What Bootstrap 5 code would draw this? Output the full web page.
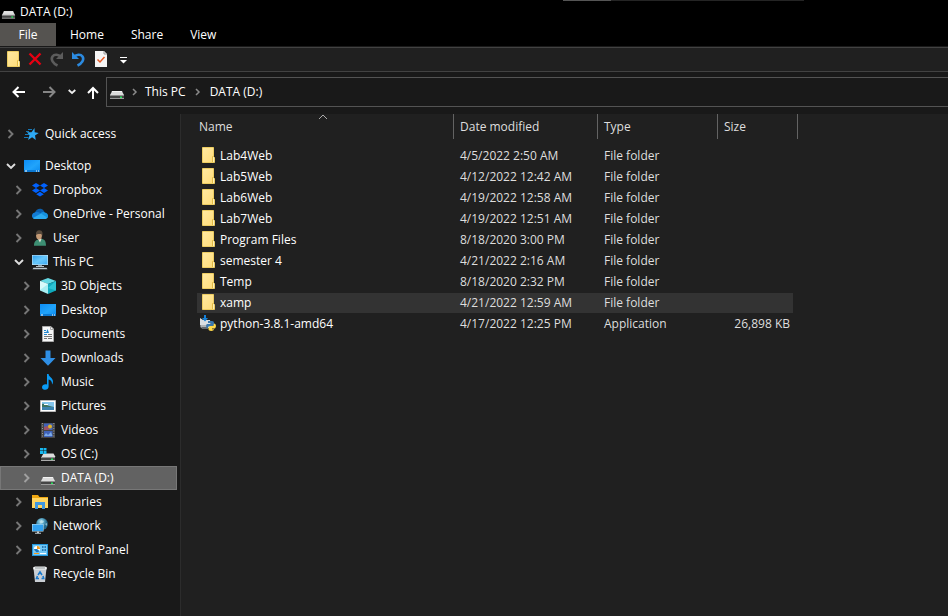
<!DOCTYPE html>
<html lang="en" data-bs-theme="dark">
<head>
<meta charset="utf-8">
<meta name="viewport" content="width=device-width, initial-scale=1">
<title>DATA (D:)</title>
<link href="https://cdn.jsdelivr.net/npm/bootstrap@5.3.0/dist/css/bootstrap.min.css" rel="stylesheet">
<style>
  body { background: #191919; color: #fff; font: 12px/24px "Open Sans", "Noto Sans", sans-serif; }
  button { font: inherit; color: inherit; background: none; border: 0; padding: 0; }
  svg { display: block; flex: none; }
  a { color: inherit; text-decoration: none; }
  .titlebar { background: #000; height: 23px; padding-left: 1px; }
  .behind { position: absolute; top: 0; left: 563px; width: 241px; height: 1px; background: linear-gradient(90deg, #555 20%, #242424 20%); }
  .ribbon { background: #000; height: 24px; border-bottom: 1px solid #191919; }
  .ribbon button { height: 23px; padding: 0 13px 0 14px; }
  .ribbon button.active { background: #555350; width: 56px; padding: 0; }
  .quickbar { background: #202020; border-top: 1px solid #424242; border-bottom: 1px solid #424242; height: 25px; padding: 0 0 2px 5px; gap: 6px; }
  .addressrow { padding: 5px 0 7px 11px; }
  .history { width: 95px; gap: 10px; }
  .history .forward { margin-left: 5px; }
  .crumbs { border: 1px solid #535353; border-right: 0; height: 30px; padding-left: 2px; }
  .crumbs svg + svg { margin: 0 3px 0 1px; }
  .tree { width: 180px; padding: 8px 0; }
  .tree li { height: 24px; display: flex; align-items: center; padding-left: 2px; border: 1px solid transparent; margin-right: 3px; }
  .tree li a { display: flex; align-items: center; gap: 5px; }
  .tree li button { width: 16px; height: 22px; margin-right: 5px; color: #767676; }
  .tree li button.open { color: #dedede; }
  .tree .lv1 { padding-left: 10px; }
  .tree .lv2 { padding-left: 18px; }
  .tree .leaf { padding-left: 31px; }
  .tree .picked { background: #626262; border-color: #777; }
  .tree .picked button { color: #a0a0a0; }
  .pane { background: #202020; border-left: 1px solid #2c2c2c; padding-left: 12px; }
  .files { border-collapse: separate; border-spacing: 0; color: #dedede; table-layout: fixed; width: 605px; }
  .files th { font-weight: 400; height: 25px; line-height: 25px; padding: 0 6px; border-right: 1px solid #636363; }
  .files th:first-child { width: 261px; position: relative; }
  .files th svg { position: absolute; top: 0; left: 50%; transform: translateX(-50%); }
  .files td { height: 21px; line-height: 21px; padding: 0 6px; background-clip: padding-box; white-space: nowrap; }
  .files td:first-child { border-left: 4px solid transparent; padding-left: 3px; color: #fff; }
  .files td:last-child { border-right: 5px solid transparent; padding-right: 3px; text-align: right; }
  .files tr.hovered td { background-color: #333; box-shadow: inset 0 1px #202020; }
  .w-date { width: 144px; } .w-type { width: 120px; } .w-size { width: 80px; }
  .files .gap-row td { height: 6px; line-height: 6px; }
  .filename { gap: 4px; }
  .filename svg { margin-bottom: 1px; }
</style>
<script src="https://cdn.jsdelivr.net/npm/bootstrap@5.3.0/dist/js/bootstrap.bundle.min.js"></script>
</head>
<body class="min-vh-100 d-flex flex-column">

<svg width="0" height="0" class="position-absolute" aria-hidden="true">
  <defs>
    <linearGradient id="gFold" x2="1" y2="1"><stop stop-color="#ffe9a2"/><stop offset="1" stop-color="#ffdc78"/></linearGradient>
    <linearGradient id="gScreen" x2="1" y2="1"><stop stop-color="#0c8cf5"/><stop offset=".55" stop-color="#21a4fb"/><stop offset="1" stop-color="#0a8af0"/></linearGradient>
    <linearGradient id="gPc" x2="1" y2="1"><stop stop-color="#2d9fee"/><stop offset=".5" stop-color="#68c8fb"/><stop offset="1" stop-color="#3eaaf2"/></linearGradient>
    <radialGradient id="gGlobe" cx=".4" cy=".3"><stop stop-color="#b8e0ec"/><stop offset=".5" stop-color="#5da8c6"/><stop offset="1" stop-color="#23698d"/></radialGradient>
    <symbol id="drive" viewBox="0 0 16 16"><path d="M3.200 5h9.600L15 9H1z" fill="#dcdcdc"/><path d="M3.200 5h9.600l.6 1H2.600z" fill="#f3f3f3"/><path d="M1 9h14v3.600H1z" fill="#454545"/><path d="M1 9h14v1H1z" fill="#8d8d8d"/><path d="M1 12h14v1H1z" fill="#9a9a9a"/><path d="M11 10.500h2V12h-2z" fill="#28e05b"/></symbol>
    <symbol id="osdrive" viewBox="0 0 16 16"><path d="M3.500 7.500h10L15.500 11h-14z" fill="#dcdcdc"/><path d="M1 11h14v3.600H1z" fill="#454545"/><path d="M1 11h14v1H1z" fill="#8d8d8d"/><path d="M1 14h14v1H1z" fill="#aaa"/><path d="M11 12.400h2V14h-2z" fill="#28e05b"/><path d="M0 2h3v2.500H0zM3.500 2h3v2.500h-3zM0 5h3v3H0zM3.500 5h3v3h-3z" fill="#18b8f0"/></symbol>
    <symbol id="folder" viewBox="0 0 16 16"><path d="M2.500.5h11v10h1v5h-12z" fill="url(#gFold)" stroke="#edcd62"/><path d="M12.500 15V9.500h1" fill="none" stroke="#e2bb44"/><path d="M13 10h1v5h-1z" fill="#fff0b8"/></symbol>
    <symbol id="chev" viewBox="0 0 16 16"><path d="M5.500 4l4 4-4 4" fill="none" stroke="currentColor" stroke-width="1.900"/></symbol>
    <symbol id="chevd" viewBox="0 0 16 16"><path d="M4 6l4 4 4-4" fill="none" stroke="currentColor" stroke-width="1.900"/></symbol>
    <symbol id="star" viewBox="0 0 16 16"><path d="M10.500 2l.2 4.300 4 .7-3.700 2.500.8 4.500-3.700-2.700-4.100 2.700 1.500-4.700L3 6.300l4.500-.1z" fill="#2eaaf5"/><path d="M4 3.500h4M2 5.500h3M1 8.500h4M0 11.500h4.500" stroke="#1679b8"/></symbol>
    <symbol id="desk" viewBox="0 0 16 16"><path d="M0 2h16v12H0z" fill="url(#gScreen)"/><path d="M0 12h16v2H0z" fill="#0b79d2"/><path d="M1 12.500h2v1H1zM12 12.500h1v1h-1zM14 12.500h1v1h-1z" fill="#fff"/></symbol>
    <symbol id="dropbox" viewBox="0 0 16 16"><path d="M4 1l4 2.500L4 6 0 3.500zM12 1l4 2.500L12 6 8 3.500zM4 6l4 2.500L4 11 0 8.500zM12 6l4 2.500-4 2.500-4-2.500zM8 9.800l3.800 2.400L8 14.600l-3.800-2.400z" fill="#0061fe"/></symbol>
    <symbol id="cloud" viewBox="0 0 16 16"><path d="M3 6.500C4 3.500 7 2 9.500 3c1.700.6 2.600 2 3 3.300L8 11 2 10z" fill="#0a5fae"/><path d="M3.500 6.200C6 5.500 7.500 6.400 9 7.500L3.500 13C-1 13-1.500 7 3.500 6.200z" fill="#127bd3"/><path d="M8.500 7.200c1.700-1.500 4-1.400 5-.4 2.500.6 3.300 3.300 1.900 5.100L10 11z" fill="#1490df"/><path d="M1 12l8-4.500 6.500 4.200c-.6.900-1.500 1.300-2.500 1.300H3.500c-1.200 0-2-.4-2.500-1z" fill="#2baaf0"/></symbol>
    <symbol id="user" viewBox="0 0 16 16"><path d="M2 15.700c0-4 2-6 4.500-6.200L10 9c3 .4 4 3 4 6.700z" fill="#3d8f73"/><path d="M6 9l2 3.500L9.700 8.500z" fill="#e8e4dc"/><ellipse cx="7" cy="5.500" rx="2.900" ry="4" fill="#c49a75"/><path d="M4 5C3.500 1.500 5.500 0 7.500.3 10.500.5 11 3 10.400 6l-1-2C7.500 4 5.500 3.500 4 5z" fill="#55483b"/></symbol>
    <symbol id="pc" viewBox="0 0 16 16"><path d="M0 1h16v10H0z" fill="#d1e5ef"/><path d="M.5 1.500h15v9H.5z" fill="url(#gPc)"/><path d="M6 11h4v2H6z" fill="#83939d"/><path d="M4 12h8v1H4z" fill="#b9c4ca"/><path d="M1.500 13.700h13l1 1.500H.5z" fill="#b9c8d0"/></symbol>
    <symbol id="cube" viewBox="0 0 16 16"><path d="M8 0l8 3-8 3-8-3z" fill="#65d9e4"/><path d="M0 3l8 3v10l-8-3.500z" fill="#a8eef2"/><path d="M8 6l8-3v9.500L8 16z" fill="#0faabd"/><path d="M0 3l8 3-8 6z" fill="#d7fafa"/><path d="M16 3v9.500L8 10z" fill="#2dc1d2"/></symbol>
    <symbol id="doc" viewBox="0 0 16 16"><path d="M2.500.5h8.500l2.500 2.500v12.500h-11z" fill="#f7f7f7" stroke="#aaa"/><path d="M10.500.5v3h3" fill="none" stroke="#aaa"/><path d="M4 4.500h2M4 6.500h4M4 8.500h3" stroke="#2387cf"/><path d="M6 7l1.500-4L9 7z" fill="#2387cf"/><path d="M8 8.500h4M4 10.500h8M4 12.500h3M8 12.500h4" stroke="#777"/></symbol>
    <symbol id="down" viewBox="0 0 16 16"><path d="M5.500.5h5V8h5L8 15.700.5 8h5z" fill="#2f8fe5"/></symbol>
    <symbol id="music" viewBox="0 0 16 16"><path d="M7 0h1.600c.3 3.500 4.400 3.500 4.400 7.500 0 1.200-.4 2.300-1 3 .2-3-1-4.500-3.400-5v7.300C8.600 17 2 16.600 2 13.200 2 10.600 5 9.800 7 10.500z" fill="#0a9bf5"/></symbol>
    <symbol id="pic" viewBox="0 0 16 16"><path d="M.5 2.500h15v11H.5z" fill="#fff" stroke="#b9b9b9"/><path d="M2 4h12v8H2z" fill="#84c6ed"/><path d="M2 6c3-1 4 1.500 12 3v1H2z" fill="#3d7564"/><path d="M2 9h12v3H2z" fill="#3b82af"/><path d="M4 6h4v1H4z" fill="#fff"/></symbol>
    <symbol id="video" viewBox="0 0 16 16"><path d="M1 1h14v15H1z" fill="#454545"/><path d="M4 1.500h8.500V8H4zM4 9h8.500v6H4z" fill="#3f62b9"/><path d="M2.500 1v15M13.800 1v15" stroke="#999" stroke-dasharray="1 1.500"/><path d="M4 7V5l3-1 3 1-1 3H4z" fill="#9a5268"/><circle cx="10" cy="4.500" r="2" fill="#dfb126"/><path d="M4 14l2-3 2 2 3-3 1.500 4z" fill="#7caae8"/></symbol>
    <symbol id="lib" viewBox="0 0 16 16"><path d="M0 1h6l1.500 2H16v11H0z" fill="#eea711"/><path d="M0 4h16v10H0z" fill="#ffd561"/><path d="M3 15V8h10v7h-3v-4H6v4z" fill="#3f97e0"/></symbol>
    <symbol id="net" viewBox="0 0 16 16"><circle cx="10" cy="6" r="5.900" fill="url(#gGlobe)"/><path d="M9 2l3 1-1 2-3 .5zM13 6l2-1v3z" fill="#d1edf2" opacity=".6"/><path d="M0 6h11.500v7.500H0z" fill="#c4e7f6"/><path d="M.5 6.500h10.500V13H.5z" fill="#31a1ef"/><path d="M5 13.500h2v1.200H5zM3 14.700h6v1H3z" fill="#c2ced5"/></symbol>
    <symbol id="cp" viewBox="0 0 16 16"><path d="M0 2h16v12H0z" fill="#2397dd"/><path d="M1 3h14v10H1z" fill="#73c8f5"/><circle cx="5" cy="7" r="3.100" fill="#fff"/><path d="M5 7V4a3 3 0 0 1 3 3z" fill="#f39b1e"/><path d="M5 7l2.500 2A3.100 3.100 0 0 1 2 7z" fill="#1678c0"/><path d="M10 5h1.500M12.500 5H14M10 8h1.500M12.500 8H14" stroke="#125c9c" stroke-width="1.500"/><path d="M2 11.500h5" stroke="#f39b1e"/><path d="M8 11.500h6" stroke="#fff"/></symbol>
    <symbol id="bin" viewBox="0 0 16 16"><path d="M1.500 2h13L13 16H3z" fill="#c9ced3"/><path d="M1 1.500L3 .5h10l2 1-.5 2h-13z" fill="#f2f3f4"/><path d="M3 1.500h10v1H3z" fill="#8f969b"/><path d="M6 9l2-3 2 3M11 10l.7 2.500H9.500M7 12.500H4.500l.9-2.500" fill="none" stroke="#1879cd" stroke-width="1.600"/></symbol>
    <symbol id="py" viewBox="0 0 16 16"><path d="M0 3l3 2h7l1 6-1 2H1l-1-3z" fill="#d9dfe3"/><path d="M0 10h8v4H2z" fill="#62696e"/><path d="M1 11h6" stroke="#fff"/><path d="M4 0h2v3h2L5 6.500 2 3h2z" fill="#1681d8"/><path d="M8 6h4c1.500 0 2 .8 2 2v2l-2 1.500H8.500L7.500 13C5.500 13 6 9 7 9h4V8H8z" fill="#3a78ad"/><path d="M14 8.500c2.500 0 2.500 4.500.5 5H12v.8h2c0 2-5.500 2.200-5.500 0v-2l1.500-1.200h3.300z" fill="#ffd94a"/></symbol>
  </defs>
</svg>

<header>
  <div class="titlebar d-flex align-items-center">
    <svg width="15" height="16" class="mt-1"><use href="#drive"/></svg>
    <span class="ms-1">DATA (D:)</span>
    <span class="behind"></span>
  </div>
  <nav class="ribbon d-flex" aria-label="Ribbon">
    <button type="button" class="active">File</button>
    <button type="button">Home</button>
    <button type="button">Share</button>
    <button type="button">View</button>
  </nav>
  <div class="quickbar d-flex align-items-center">
    <button type="button" aria-label="New folder"><svg width="16" height="16"><use href="#folder"/></svg></button>
    <button type="button" aria-label="Delete"><svg width="16" height="16" viewBox="0 0 16 16"><path d="M2.500 2.500l11 11M13.500 2.500l-11 11" stroke="#e60012" stroke-width="2.400"/></svg></button>
    <button type="button" aria-label="Redo"><svg width="16" height="16" viewBox="0 0 16 16"><path d="M8.500 14.500C4 12.500 1.500 8.500 3.500 5.500c2-2.700 6-2 8.500.5" fill="none" stroke="#5c5c5c" stroke-width="2.600"/><path d="M14 1v7H7z" fill="#5c5c5c"/></svg></button>
    <button type="button" aria-label="Undo"><svg width="16" height="16" viewBox="0 0 16 16"><path d="M6.500 14.500c4.500-2 7-6 5-9-2-2.700-6-2-8.500.5" fill="none" stroke="#2b8ae0" stroke-width="2.600"/><path d="M1 1v7h7z" fill="#2b8ae0"/></svg></button>
    <button type="button" aria-label="Properties"><svg width="16" height="16" viewBox="0 0 16 16"><path d="M2 0h9l3 3v13H2z" fill="#f5f5f5"/><path d="M11 0v3h3" fill="none" stroke="#999"/><path d="M4.500 8.500L7 11l4.500-5" fill="none" stroke="#e85b25" stroke-width="1.500"/></svg></button>
    <button type="button" aria-label="Customize toolbar"><svg width="16" height="16" viewBox="0 0 16 16"><path d="M5 6.500h7" stroke="#fff"/><path d="M5 9h7l-3.500 3.500z" fill="#fff"/></svg></button>
  </div>
  <div class="addressrow d-flex align-items-center">
    <div class="history d-flex align-items-center">
      <button type="button" aria-label="Back"><svg width="16" height="16" viewBox="0 0 16 16"><path d="M14 8H3M7.500 3L2.500 8l5 5" fill="none" stroke="#fff" stroke-width="2"/></svg></button>
      <button type="button" class="forward" aria-label="Forward"><svg width="16" height="16" viewBox="0 0 16 16"><path d="M1 8h11M7.500 3l5 5-5 5" fill="none" stroke="#858585" stroke-width="2"/></svg></button>
      <button type="button" aria-label="Recent locations"><svg width="8" height="16" viewBox="0 0 8 16"><path d="M.7 6L4 9l3.300-3" fill="none" stroke="#eee" stroke-width="1.800"/></svg></button>
      <button type="button" aria-label="Up"><svg width="16" height="16" viewBox="0 0 16 16"><path d="M7 15V4M2 9l5-5 5 5" fill="none" stroke="#fff" stroke-width="2"/></svg></button>
    </div>
    <nav class="crumbs d-flex align-items-center flex-grow-1" aria-label="Address">
      <svg width="16" height="16" class="mt-1"><use href="#drive"/></svg>
      <svg width="16" height="16" viewBox="0 0 16 16"><path d="M7 5l3 3-3 3" fill="none" stroke="#8a8a8a" stroke-width="1.500"/></svg>
      <a href="#">This PC</a>
      <svg width="16" height="16" viewBox="0 0 16 16" class="mx-1"><path d="M6 5l3 3-3 3" fill="none" stroke="#8a8a8a" stroke-width="1.500"/></svg>
      <a href="#">DATA (D:)</a>
    </nav>
  </div>
</header>

<main class="d-flex flex-grow-1">
  <nav class="tree flex-shrink-0" aria-label="Folders">
    <ul class="list-unstyled mb-0">
      <li class="mb-2"><button type="button" aria-label="Expand Quick access"><svg width="16" height="16"><use href="#chev"/></svg></button><a href="#"><svg width="16" height="16"><use href="#star"/></svg>Quick access</a></li>
      <li><button type="button" class="open" aria-label="Collapse Desktop"><svg width="16" height="16"><use href="#chevd"/></svg></button><a href="#"><svg width="16" height="16"><use href="#desk"/></svg>Desktop</a></li>
      <li class="lv1"><button type="button" aria-label="Expand Dropbox"><svg width="16" height="16"><use href="#chev"/></svg></button><a href="#"><svg width="16" height="16"><use href="#dropbox"/></svg>Dropbox</a></li>
      <li class="lv1"><button type="button" aria-label="Expand OneDrive"><svg width="16" height="16"><use href="#chev"/></svg></button><a href="#"><svg width="16" height="16"><use href="#cloud"/></svg>OneDrive - Personal</a></li>
      <li class="lv1"><button type="button" aria-label="Expand User"><svg width="16" height="16"><use href="#chev"/></svg></button><a href="#"><svg width="16" height="16"><use href="#user"/></svg>User</a></li>
      <li class="lv1"><button type="button" class="open" aria-label="Collapse This PC"><svg width="16" height="16"><use href="#chevd"/></svg></button><a href="#"><svg width="16" height="16"><use href="#pc"/></svg>This PC</a></li>
      <li class="lv2"><button type="button" aria-label="Expand 3D Objects"><svg width="16" height="16"><use href="#chev"/></svg></button><a href="#"><svg width="16" height="16"><use href="#cube"/></svg>3D Objects</a></li>
      <li class="lv2"><button type="button" aria-label="Expand Desktop"><svg width="16" height="16"><use href="#chev"/></svg></button><a href="#"><svg width="16" height="16"><use href="#desk"/></svg>Desktop</a></li>
      <li class="lv2"><button type="button" aria-label="Expand Documents"><svg width="16" height="16"><use href="#chev"/></svg></button><a href="#"><svg width="16" height="16"><use href="#doc"/></svg>Documents</a></li>
      <li class="lv2"><button type="button" aria-label="Expand Downloads"><svg width="16" height="16"><use href="#chev"/></svg></button><a href="#"><svg width="16" height="16"><use href="#down"/></svg>Downloads</a></li>
      <li class="lv2"><button type="button" aria-label="Expand Music"><svg width="16" height="16"><use href="#chev"/></svg></button><a href="#"><svg width="16" height="16"><use href="#music"/></svg>Music</a></li>
      <li class="lv2"><button type="button" aria-label="Expand Pictures"><svg width="16" height="16"><use href="#chev"/></svg></button><a href="#"><svg width="16" height="16"><use href="#pic"/></svg>Pictures</a></li>
      <li class="lv2"><button type="button" aria-label="Expand Videos"><svg width="16" height="16"><use href="#chev"/></svg></button><a href="#"><svg width="16" height="16"><use href="#video"/></svg>Videos</a></li>
      <li class="lv2"><button type="button" aria-label="Expand OS (C:)"><svg width="16" height="16"><use href="#chev"/></svg></button><a href="#"><svg width="16" height="16"><use href="#osdrive"/></svg>OS (C:)</a></li>
      <li class="lv2 picked"><button type="button" aria-label="Expand DATA (D:)"><svg width="16" height="16"><use href="#chev"/></svg></button><a href="#" aria-current="page"><svg width="16" height="16" class="mt-1"><use href="#drive"/></svg>DATA (D:)</a></li>
      <li class="lv1"><button type="button" aria-label="Expand Libraries"><svg width="16" height="16"><use href="#chev"/></svg></button><a href="#"><svg width="16" height="16"><use href="#lib"/></svg>Libraries</a></li>
      <li class="lv1"><button type="button" aria-label="Expand Network"><svg width="16" height="16"><use href="#chev"/></svg></button><a href="#"><svg width="16" height="16"><use href="#net"/></svg>Network</a></li>
      <li class="lv1"><button type="button" aria-label="Expand Control Panel"><svg width="16" height="16"><use href="#chev"/></svg></button><a href="#"><svg width="16" height="16"><use href="#cp"/></svg>Control Panel</a></li>
      <li class="leaf"><a href="#"><svg width="16" height="16"><use href="#bin"/></svg>Recycle Bin</a></li>
    </ul>
  </nav>
  <section class="pane flex-grow-1" aria-label="Files">
    <table class="files">
      <thead>
        <tr>
          <th scope="col" aria-sort="ascending">Name<svg width="10" height="6" viewBox="0 0 10 6"><path d="M1 5l4-4 4 4" fill="none" stroke="#aaa"/></svg></th>
          <th scope="col" class="w-date">Date modified</th>
          <th scope="col" class="w-type">Type</th>
          <th scope="col" class="w-size">Size</th>
        </tr>
      </thead>
      <tbody>
        <tr class="gap-row" aria-hidden="true"><td colspan="4"></td></tr>
        <tr><td><div class="filename d-flex align-items-center"><svg width="16" height="16"><use href="#folder"/></svg>Lab4Web</div></td><td>4/5/2022 2:50 AM</td><td>File folder</td><td></td></tr>
        <tr><td><div class="filename d-flex align-items-center"><svg width="16" height="16"><use href="#folder"/></svg>Lab5Web</div></td><td>4/12/2022 12:42 AM</td><td>File folder</td><td></td></tr>
        <tr><td><div class="filename d-flex align-items-center"><svg width="16" height="16"><use href="#folder"/></svg>Lab6Web</div></td><td>4/19/2022 12:58 AM</td><td>File folder</td><td></td></tr>
        <tr><td><div class="filename d-flex align-items-center"><svg width="16" height="16"><use href="#folder"/></svg>Lab7Web</div></td><td>4/19/2022 12:51 AM</td><td>File folder</td><td></td></tr>
        <tr><td><div class="filename d-flex align-items-center"><svg width="16" height="16"><use href="#folder"/></svg>Program Files</div></td><td>8/18/2020 3:00 PM</td><td>File folder</td><td></td></tr>
        <tr><td><div class="filename d-flex align-items-center"><svg width="16" height="16"><use href="#folder"/></svg>semester 4</div></td><td>4/21/2022 2:16 AM</td><td>File folder</td><td></td></tr>
        <tr><td><div class="filename d-flex align-items-center"><svg width="16" height="16"><use href="#folder"/></svg>Temp</div></td><td>8/18/2020 2:32 PM</td><td>File folder</td><td></td></tr>
        <tr class="hovered"><td><div class="filename d-flex align-items-center"><svg width="16" height="16"><use href="#folder"/></svg>xamp</div></td><td>4/21/2022 12:59 AM</td><td>File folder</td><td></td></tr>
        <tr><td><div class="filename d-flex align-items-center"><svg width="16" height="16"><use href="#py"/></svg>python-3.8.1-amd64</div></td><td>4/17/2022 12:25 PM</td><td>Application</td><td>26,898 KB</td></tr>
      </tbody>
    </table>
  </section>
</main>
</body>
</html>
